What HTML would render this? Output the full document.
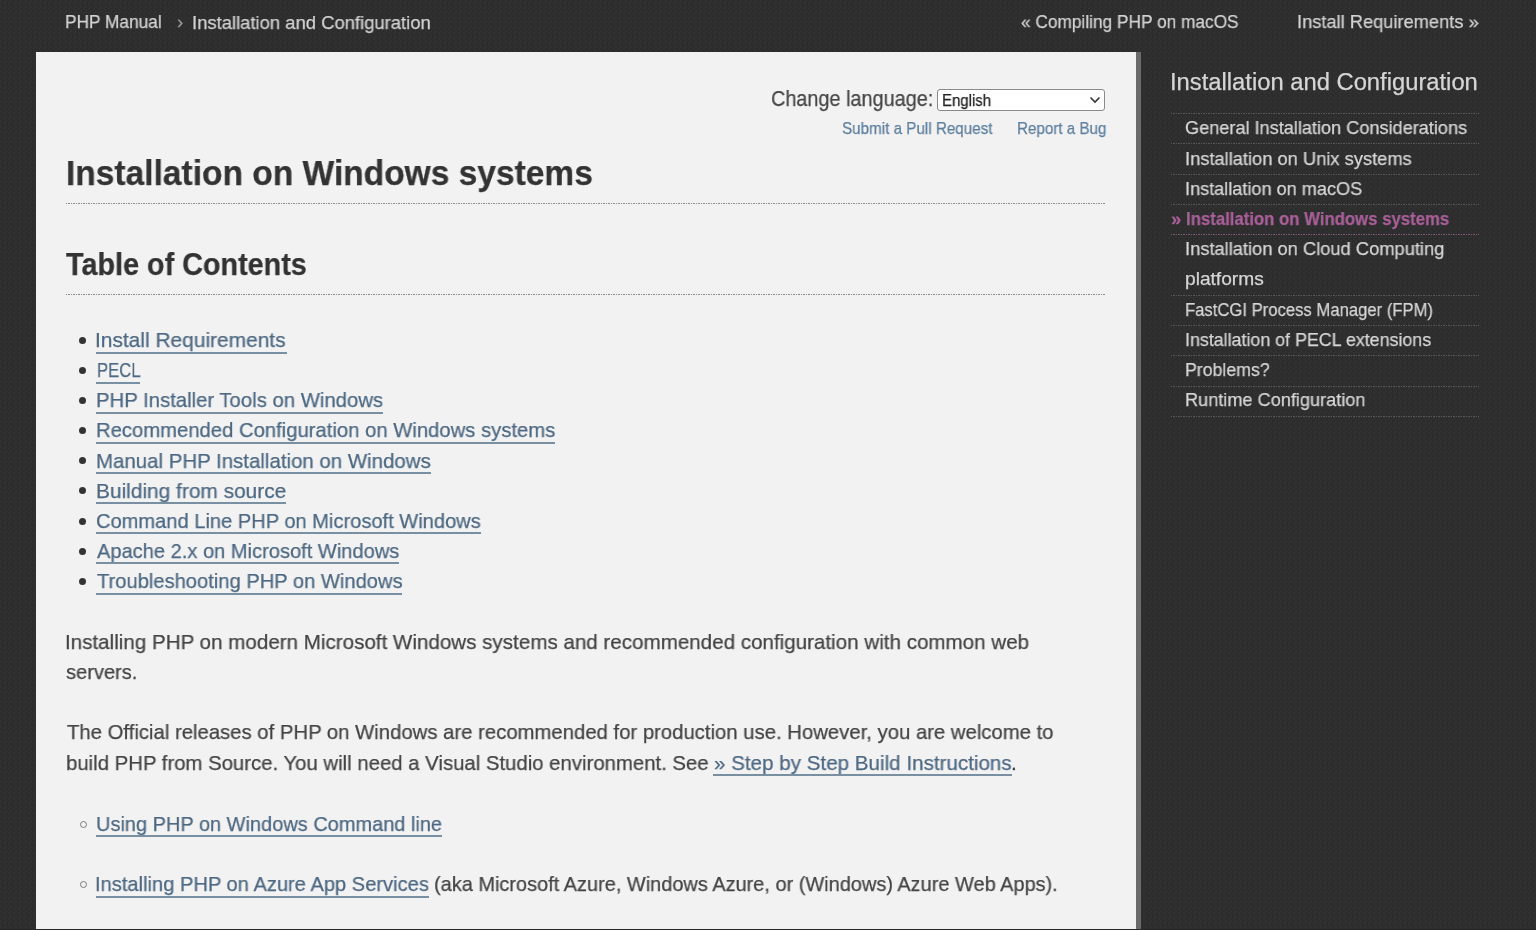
<!DOCTYPE html>
<html><head><meta charset='utf-8'><title>Installation on Windows systems</title><style>
html,body{margin:0;padding:0;width:1536px;height:930px;overflow:hidden;}
body{background:#2e2e2e;background-image:repeating-conic-gradient(#2c2c2c 0 25%,#313131 0 50%);background-size:5px 5px;position:relative;font-family:'Liberation Sans', sans-serif;}
.t{position:absolute;white-space:nowrap;transform-origin:0 0;will-change:transform;-webkit-text-stroke:0.25px currentColor;}
.box{position:absolute;left:36px;top:52px;width:1100px;height:878px;background:#f2f2f2;}
.boxr{position:absolute;left:1136px;top:52px;width:5px;height:878px;background:#6a6a6a;}
.dot{position:absolute;height:1px;background:repeating-linear-gradient(90deg,#8a8a8a 0 1.25px,rgba(0,0,0,0) 1.25px 2.5px);}
.sdot{position:absolute;left:1171px;width:308px;height:1px;background:repeating-linear-gradient(90deg,#575757 0 1.25px,rgba(0,0,0,0) 1.25px 2.5px);}
.sel{position:absolute;left:937px;top:89px;width:166px;height:20px;background:#fff;border:1px solid #8a8a8a;border-radius:3px;}
.ul{position:absolute;height:2px;background:#7890a2;}
.disc{position:absolute;width:7px;height:7px;border-radius:50%;background:#333;}
.circ{position:absolute;width:5px;height:5px;border-radius:50%;border:1px solid #777;}
</style></head><body>
<div class="box"></div>
<div class="boxr"></div>
<div class="sel"></div>
<svg style="position:absolute;left:1088px;top:95px" width="14" height="10" viewBox="0 0 14 10"><polyline points="2.5,2.5 7,7 11.5,2.5" fill="none" stroke="#333" stroke-width="1.6"/></svg>
<div class="dot" style="left:66px;top:203px;width:1039px"></div>
<div class="dot" style="left:66px;top:294px;width:1039px"></div>
<div class="sdot" style="top:113px"></div>
<div class="sdot" style="top:143px"></div>
<div class="sdot" style="top:174px"></div>
<div class="sdot" style="top:204px"></div>
<div class="sdot" style="top:234px;background:repeating-linear-gradient(90deg,#7d5a74 0 1.25px,rgba(0,0,0,0) 1.25px 2.5px)"></div>
<div class="sdot" style="top:295px"></div>
<div class="sdot" style="top:325px"></div>
<div class="sdot" style="top:355px"></div>
<div class="sdot" style="top:386px"></div>
<div class="sdot" style="top:416px"></div>
<div style="position:absolute;left:0;top:929px;width:1536px;height:1px;background:#262626"></div>

<div class="t" id="nav1" style="left:65.22px;top:13px;font-size:18.6px;line-height:18.6px;color:#d2d2d2;transform:scaleX(0.9290);">PHP Manual</div>
<div class="t" id="nav2" style="left:176.52px;top:13px;font-size:18.6px;line-height:18.6px;color:#9a9a9a;">›</div>
<div class="t" id="nav3" style="left:191.94px;top:14px;font-size:18.6px;line-height:18.6px;color:#d2d2d2;transform:scaleX(0.9914);">Installation and Configuration</div>
<div class="t" id="nav4" style="left:1021.05px;top:13px;font-size:18.6px;line-height:18.6px;color:#d2d2d2;transform:scaleX(0.9289);">« Compiling PHP on macOS</div>
<div class="t" id="nav5" style="left:1297.19px;top:13px;font-size:18.6px;line-height:18.6px;color:#d2d2d2;transform:scaleX(0.9819);">Install Requirements »</div>
<div class="t" id="lang" style="left:770.77px;top:88px;font-size:22px;line-height:22px;color:#444444;transform:scaleX(0.9025);">Change language:</div>
<div class="t" id="eng" style="left:942.22px;top:93px;font-size:16px;line-height:16px;color:#222222;transform:scaleX(0.9358);">English</div>
<div class="t" id="pr" style="left:841.65px;top:120px;font-size:17px;line-height:17px;color:#5d7f9e;transform:scaleX(0.8945);">Submit a Pull Request</div>
<div class="t" id="bug" style="left:1016.84px;top:120px;font-size:17px;line-height:17px;color:#5d7f9e;transform:scaleX(0.8922);">Report a Bug</div>
<div class="t" id="h1" style="left:66.09px;top:156px;font-size:35.5px;line-height:35.5px;color:#333333;font-weight:bold;transform:scaleX(0.9444);">Installation on Windows systems</div>
<div class="t" id="h2" style="left:65.70px;top:248px;font-size:32px;line-height:32px;color:#333333;font-weight:bold;transform:scaleX(0.8990);">Table of Contents</div>
<div class="t" id="toc0" style="left:95.33px;top:329px;font-size:21px;line-height:21px;color:#4d6882;transform:scaleX(0.9957);">Install Requirements</div>
<div class="t" id="toc1" style="left:96.70px;top:359px;font-size:21px;line-height:21px;color:#4d6882;transform:scaleX(0.7922);">PECL</div>
<div class="t" id="toc2" style="left:95.75px;top:389px;font-size:21px;line-height:21px;color:#4d6882;transform:scaleX(0.9671);">PHP Installer Tools on Windows</div>
<div class="t" id="toc3" style="left:95.80px;top:419px;font-size:21px;line-height:21px;color:#4d6882;transform:scaleX(0.9644);">Recommended Configuration on Windows systems</div>
<div class="t" id="toc4" style="left:95.77px;top:450px;font-size:21px;line-height:21px;color:#4d6882;transform:scaleX(0.9732);">Manual PHP Installation on Windows</div>
<div class="t" id="toc5" style="left:95.58px;top:480px;font-size:21px;line-height:21px;color:#4d6882;transform:scaleX(0.9938);">Building from source</div>
<div class="t" id="toc6" style="left:95.85px;top:510px;font-size:21px;line-height:21px;color:#4d6882;transform:scaleX(0.9565);">Command Line PHP on Microsoft Windows</div>
<div class="t" id="toc7" style="left:96.55px;top:540px;font-size:21px;line-height:21px;color:#4d6882;transform:scaleX(0.9557);">Apache 2.x on Microsoft Windows</div>
<div class="t" id="toc8" style="left:97.38px;top:570px;font-size:21px;line-height:21px;color:#4d6882;transform:scaleX(0.9589);">Troubleshooting PHP on Windows</div>
<div class="t" id="p1a" style="left:65.06px;top:631px;font-size:21px;line-height:21px;color:#444444;transform:scaleX(0.9802);">Installing PHP on modern Microsoft Windows systems and recommended configuration with common web</div>
<div class="t" id="p1b" style="left:66.29px;top:661px;font-size:21px;line-height:21px;color:#444444;transform:scaleX(0.9561);">servers.</div>
<div class="t" id="p2a" style="left:67.01px;top:721px;font-size:21px;line-height:21px;color:#444444;transform:scaleX(0.9667);">The Official releases of PHP on Windows are recommended for production use. However, you are welcome to</div>
<div class="t" id="p2b" style="left:65.82px;top:752px;font-size:21px;line-height:21px;color:#444444;transform:scaleX(0.9686);">build PHP from Source. You will need a Visual Studio environment. See</div>
<div class="t" id="p2link" style="left:714.03px;top:752px;font-size:21px;line-height:21px;color:#4d6882;transform:scaleX(0.9806);">» Step by Step Build Instructions</div>
<div class="t" id="p2dot" style="left:1010.63px;top:752px;font-size:21px;line-height:21px;color:#444444;">.</div>
<div class="t" id="s1" style="left:95.80px;top:813px;font-size:21px;line-height:21px;color:#4d6882;transform:scaleX(0.9513);">Using PHP on Windows Command line</div>
<div class="t" id="s2" style="left:95.24px;top:873px;font-size:21px;line-height:21px;color:#4d6882;transform:scaleX(0.9576);">Installing PHP on Azure App Services</div>
<div class="t" id="s2b" style="left:433.61px;top:873px;font-size:21px;line-height:21px;color:#444444;transform:scaleX(0.9499);">(aka Microsoft Azure, Windows Azure, or (Windows) Azure Web Apps).</div>
<div class="t" id="sbt" style="left:1169.59px;top:71px;font-size:23.5px;line-height:23.5px;color:#d6d6d6;transform:scaleX(1.0113);">Installation and Configuration</div>
<div class="t" id="sb0" style="left:1185.10px;top:119px;font-size:18.5px;line-height:18.5px;color:#d6d6d6;transform:scaleX(0.9798);">General Installation Considerations</div>
<div class="t" id="sb1" style="left:1184.55px;top:150px;font-size:18.5px;line-height:18.5px;color:#d6d6d6;transform:scaleX(0.9886);">Installation on Unix systems</div>
<div class="t" id="sb2" style="left:1184.59px;top:180px;font-size:18.5px;line-height:18.5px;color:#d6d6d6;transform:scaleX(0.9790);">Installation on macOS</div>
<div class="t" id="sbq" style="left:1171.00px;top:210px;font-size:18.5px;line-height:18.5px;color:#a95f99;font-weight:bold;">»</div>
<div class="t" id="sb3" style="left:1185.74px;top:210px;font-size:18.5px;line-height:18.5px;color:#a95f99;font-weight:bold;transform:scaleX(0.9052);">Installation on Windows systems</div>
<div class="t" id="sb4" style="left:1184.55px;top:240px;font-size:18.5px;line-height:18.5px;color:#d6d6d6;transform:scaleX(0.9888);">Installation on Cloud Computing</div>
<div class="t" id="sb5" style="left:1184.89px;top:270px;font-size:18.5px;line-height:18.5px;color:#d6d6d6;transform:scaleX(1.0351);">platforms</div>
<div class="t" id="sb6" style="left:1185.27px;top:301px;font-size:18.5px;line-height:18.5px;color:#d6d6d6;transform:scaleX(0.9002);">FastCGI Process Manager (FPM)</div>
<div class="t" id="sb7" style="left:1184.78px;top:331px;font-size:18.5px;line-height:18.5px;color:#d6d6d6;transform:scaleX(0.9638);">Installation of PECL extensions</div>
<div class="t" id="sb8" style="left:1185.41px;top:361px;font-size:18.5px;line-height:18.5px;color:#d6d6d6;transform:scaleX(0.9568);">Problems?</div>
<div class="t" id="sb9" style="left:1185.42px;top:391px;font-size:18.5px;line-height:18.5px;color:#d6d6d6;transform:scaleX(0.9801);">Runtime Configuration</div>
<div class="ul" style="left:95.7px;top:352px;width:190.9px"></div>
<div class="ul" style="left:95.7px;top:382px;width:44.8px"></div>
<div class="ul" style="left:95.7px;top:412px;width:287.2px"></div>
<div class="ul" style="left:95.7px;top:442px;width:459.4px"></div>
<div class="ul" style="left:95.7px;top:472px;width:335.5px"></div>
<div class="ul" style="left:95.7px;top:502px;width:190.5px"></div>
<div class="ul" style="left:95.7px;top:532px;width:385.0px"></div>
<div class="ul" style="left:95.7px;top:562px;width:303.5px"></div>
<div class="ul" style="left:95.7px;top:593px;width:306.8px"></div>
<div class="ul" style="left:713.2px;top:774px;width:298.8px"></div>
<div class="ul" style="left:95.8px;top:835px;width:346.2px"></div>
<div class="ul" style="left:95.8px;top:896px;width:333.7px"></div>
<div class="disc" style="left:79px;top:337px"></div>
<div class="disc" style="left:79px;top:367px"></div>
<div class="disc" style="left:79px;top:397px"></div>
<div class="disc" style="left:79px;top:427px"></div>
<div class="disc" style="left:79px;top:457px"></div>
<div class="disc" style="left:79px;top:487px"></div>
<div class="disc" style="left:79px;top:518px"></div>
<div class="disc" style="left:79px;top:548px"></div>
<div class="disc" style="left:79px;top:578px"></div>
<div class="circ" style="left:80px;top:820.7px"></div>
<div class="circ" style="left:80px;top:881.0px"></div>
</body></html>
